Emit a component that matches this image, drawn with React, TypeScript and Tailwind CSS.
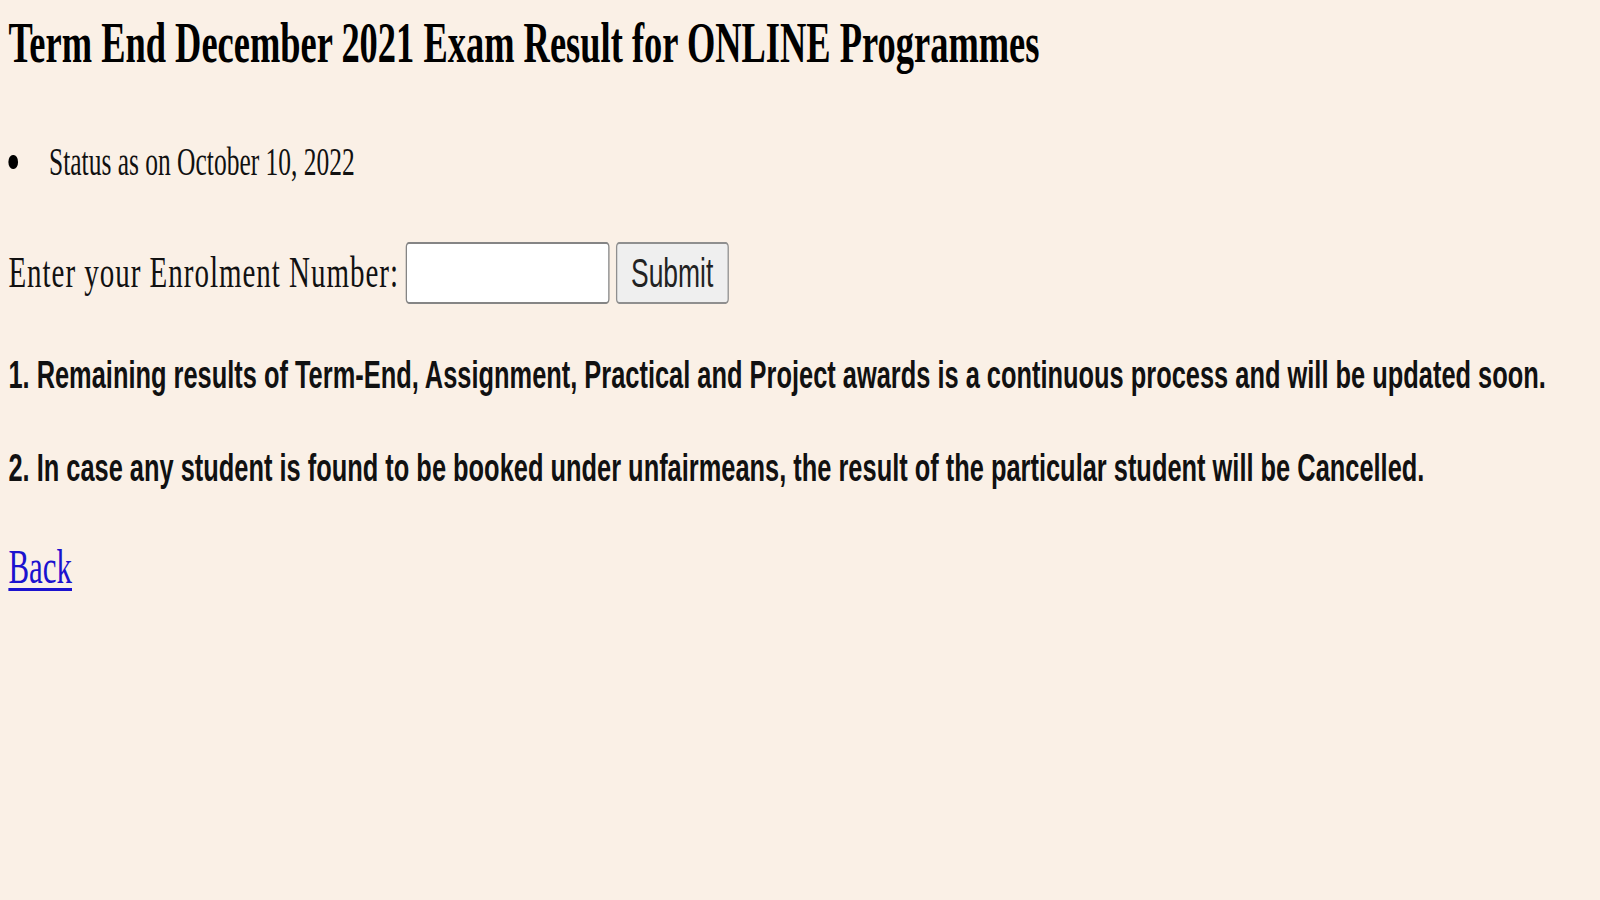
export default function App() {
  return (
    <div className="h-screen w-full overflow-hidden bg-[#faf0e6]">
      {/* the reference is a squeezed screenshot, so the page is laid out wide and narrowed */}
      <div className="w-[2481px] origin-top-left scale-x-[0.645] pl-[13px] font-['Liberation_Serif',serif] text-black">
        <h1 className="pt-[11px] text-[56.5px] font-bold leading-[64px]">
          Term End December 2021 Exam Result for ONLINE Programmes
        </h1>

        <div className="mt-[64px] flex items-center text-[39.5px] leading-[46px] text-[#111]">
          <span className="h-[14px] w-[15px] rounded-full bg-black" />
          <span className="ml-[48px]">Status as on October 10, 2022</span>
        </div>

        <form className="mt-[57px] flex items-start" onSubmit={(e) => e.preventDefault()}>
          <label className="mt-[5px] text-[45px] leading-[50px] tracking-[1.5px] text-[#111]">
            Enter your Enrolment Number:
          </label>
          <input
            type="text"
            className="ml-[10px] h-[62px] w-[316px] rounded-[5px] border-2 border-[#858585] bg-white outline-none"
          />
          <button
            type="submit"
            className="ml-[10px] h-[62px] w-[175px] rounded-[5px] border-2 border-[#8f8f8f] bg-[#efefef] font-['Liberation_Sans',sans-serif] text-[41px] leading-none text-[#222]"
          >
            Submit
          </button>
        </form>

        <div className="mt-[48px] font-['Liberation_Sans',sans-serif] text-[39.4px] font-bold leading-[44px] text-[#111]">
          <p>
            1. Remaining results of Term-End, Assignment, Practical and Project awards is a
            continuous process and will be updated soon.
          </p>
          <p className="mt-[49px]">
            2. In case any student is found to be booked under unfairmeans, the result of the
            particular student will be Cancelled.
          </p>
        </div>

        <a
          href="#"
          className="mt-[50px] inline-block text-[48px] leading-[56px] text-[#1b12cf] underline decoration-3 underline-offset-[5px]"
        >
          Back
        </a>
      </div>
    </div>
  );
}
